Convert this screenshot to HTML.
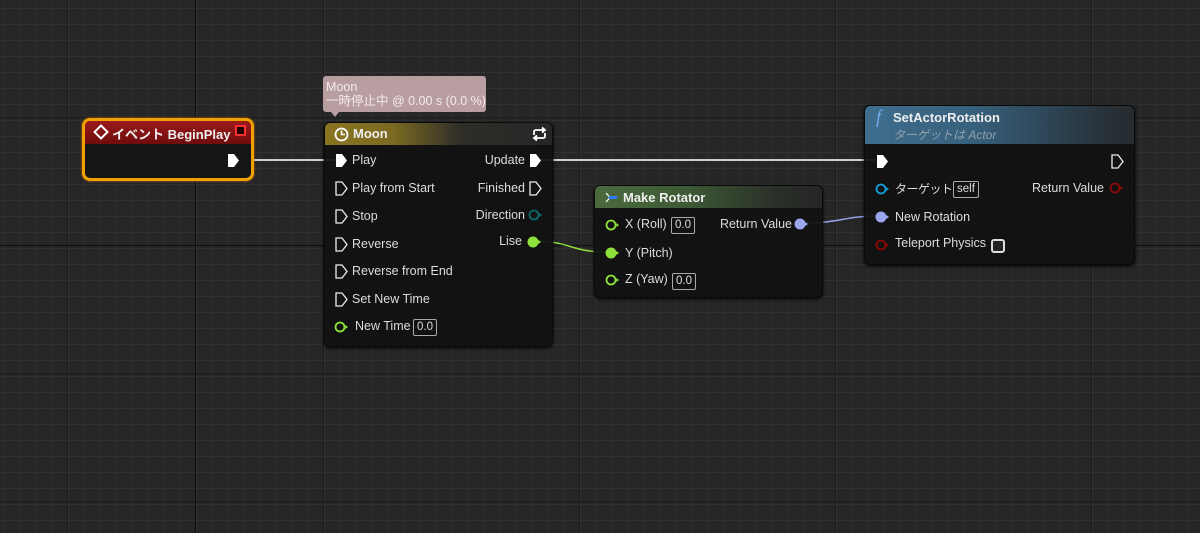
<!DOCTYPE html>
<html><head><meta charset="utf-8"><style>
*{margin:0;padding:0;box-sizing:border-box}
body{width:1200px;height:533px;overflow:hidden;position:relative;background:#262626;font-family:"Liberation Sans","Noto Sans CJK JP",sans-serif;color:#ddd;font-size:12.5px}
.grid{position:absolute;inset:0;background-image:
linear-gradient(90deg,#303030 1px,transparent 1px),linear-gradient(#303030 1px,transparent 1px);
background-size:16px 16px;background-position:4px 8px}
.dk{position:absolute;background:#1c1c1c}
.bk{position:absolute;background:#0e0e0e}
.node{position:absolute;background:rgba(16,17,16,0.93);border-radius:6px;box-shadow:0 1px 3px #000;border:1px solid #0a0a0a}
.hd{position:absolute;left:0;right:0;top:0;border-radius:5px 5px 0 0;font-weight:bold;color:#eee;font-size:12.5px}
.t{position:absolute;white-space:nowrap;color:#dcdcdc}
.p{position:absolute}
.box{position:absolute;border:1px solid #aaa;border-radius:2px;font-size:11.5px;padding:0 3px;height:17px;line-height:15px;color:#ddd}
svg{display:block}
</style></head><body>
<div class="grid"></div>
<div class="dk" style="left:67px;top:0;width:1px;height:533px"></div>
<div class="dk" style="left:323px;top:0;width:1px;height:533px"></div>
<div class="dk" style="left:579px;top:0;width:1px;height:533px"></div>
<div class="dk" style="left:835px;top:0;width:1px;height:533px"></div>
<div class="dk" style="left:1091px;top:0;width:1px;height:533px"></div>
<div class="dk" style="left:0;top:117px;width:1200px;height:1px"></div>
<div class="dk" style="left:0;top:373px;width:1200px;height:1px"></div>
<div class="dk" style="left:0;top:501px;width:1200px;height:1px"></div>
<div class="bk" style="left:195px;top:0;width:1px;height:533px"></div>
<div class="bk" style="left:0;top:245px;width:1200px;height:1px"></div>

<svg style="position:absolute;left:0;top:0" width="1200" height="533">
<path d="M245 160H335" stroke="#cfcfcf" stroke-width="2"/>
<path d="M540 160H875" stroke="#cfcfcf" stroke-width="2"/>
<path d="M535 241C570 241 570 252 607 252" stroke="#8ee03a" stroke-width="1.5" fill="none"/>
<path d="M805 223C840 223 845 216 878 216" stroke="#9ba5f0" stroke-width="1.5" fill="none"/>
</svg>

<!-- BeginPlay -->
<div style="position:absolute;left:82px;top:118px;width:172px;height:63px;border:3px solid #f0a000;border-radius:8px;background:#141514;box-shadow:0 0 2px #c07000">
 <div style="position:absolute;left:0;right:0;top:0;height:23px;background:linear-gradient(#9c1a1a,#6e0c0c);border-radius:5px 5px 0 0"></div>
 <svg class="p" style="left:8px;top:3px" width="16" height="16"><path d="M8 1.5L14.5 8L8 14.5L1.5 8Z" fill="none" stroke="#fff" stroke-width="2"/></svg>
 <div class="t" style="left:27px;top:3px;font-weight:bold;color:#eee;font-size:13px">イベント BeginPlay</div>
 <div class="p" style="left:150px;top:4px;width:11px;height:11px;border:2px solid #ff3030;background:#200"></div>
 <svg class="p" style="left:142px;top:32px" width="13" height="15"><path d="M1 1H7L12 7.5L7 14H1Z" fill="#fff"/></svg>
</div>

<!-- tooltip -->
<div style="position:absolute;left:323px;top:76px;width:163px;height:36px;background:#b89ea0;border-radius:3px;color:#f4eaea;font-size:12.5px;line-height:14px;padding:4px 0 0 3px">Moon<br>一時停止中 @ 0.00 s (0.0 %)</div>
<div style="position:absolute;left:331px;top:112px;width:0;height:0;border-left:4px solid transparent;border-right:4px solid transparent;border-top:5px solid #b89ea0"></div>

<!-- Moon -->
<div class="node" style="left:324px;top:122px;width:229px;height:225px">
 <div class="hd" style="height:22px;background:linear-gradient(90deg,#8a7420 0%,#7b6a22 30%,#2e2d28 60%,#262626 100%)"></div>
 <svg class="p" style="left:9px;top:4px" width="15" height="15"><circle cx="7.5" cy="7.5" r="6" fill="none" stroke="#fff" stroke-width="1.8"/><path d="M7.5 3.5V7.5H11" fill="none" stroke="#fff" stroke-width="1.6"/></svg>
 <div class="t" style="left:28px;top:3px;font-weight:bold;color:#eee;font-size:13px">Moon</div>
 <svg class="p" style="left:206px;top:3px" width="17" height="16"><path d="M3 9V6Q3 4 5 4H13M11 1.5L14 4L11 6.5M14 7V10Q14 12 12 12H4M6 9.5L3 12L6 14.5" fill="none" stroke="#fff" stroke-width="1.8"/></svg>
 <svg class="p" style="left:10px;top:30px" width="13" height="15"><path d="M1 1H7L12 7.5L7 14H1Z" fill="#fff"/></svg>
 <div class="t" style="left:27px;top:30px">Play</div>
 <div class="t" style="right:27px;top:30px">Update</div>
 <svg class="p" style="left:204px;top:30px" width="13" height="15"><path d="M1 1H7L12 7.5L7 14H1Z" fill="#fff"/></svg>
 <svg class="p" style="left:10px;top:58px" width="13" height="15"><path d="M1 1H7L12 7.5L7 14H1Z" fill="none" stroke="#eee" stroke-width="1.3"/></svg>
 <div class="t" style="left:27px;top:58px">Play from Start</div>
 <div class="t" style="right:27px;top:58px">Finished</div>
 <svg class="p" style="left:204px;top:58px" width="13" height="15"><path d="M1 1H7L12 7.5L7 14H1Z" fill="none" stroke="#eee" stroke-width="1.3"/></svg>
 <svg class="p" style="left:10px;top:86px" width="13" height="15"><path d="M1 1H7L12 7.5L7 14H1Z" fill="none" stroke="#eee" stroke-width="1.3"/></svg>
 <div class="t" style="left:27px;top:86px">Stop</div>
 <div class="t" style="right:27px;top:85px">Direction</div>
 <svg class="p" style="left:203px;top:86px" width="16" height="12"><circle cx="6" cy="6" r="4.5" fill="none" stroke="#0d6b68" stroke-width="1.8"/><path d="M11.5 4L14 6L11.5 8Z" fill="#0d6b68"/></svg>
 <svg class="p" style="left:10px;top:114px" width="13" height="15"><path d="M1 1H7L12 7.5L7 14H1Z" fill="none" stroke="#eee" stroke-width="1.3"/></svg>
 <div class="t" style="left:27px;top:114px">Reverse</div>
 <div class="t" style="right:30px;top:111px">Lise</div>
 <svg class="p" style="left:202px;top:113px" width="16" height="12"><circle cx="6" cy="6" r="5.5" fill="#8ee03a"/><path d="M11.5 4L14 6L11.5 8Z" fill="#8ee03a"/></svg>
 <svg class="p" style="left:10px;top:141px" width="13" height="15"><path d="M1 1H7L12 7.5L7 14H1Z" fill="none" stroke="#eee" stroke-width="1.3"/></svg>
 <div class="t" style="left:27px;top:141px">Reverse from End</div>
 <svg class="p" style="left:10px;top:169px" width="13" height="15"><path d="M1 1H7L12 7.5L7 14H1Z" fill="none" stroke="#eee" stroke-width="1.3"/></svg>
 <div class="t" style="left:27px;top:169px">Set New Time</div>
 <svg class="p" style="left:9px;top:198px" width="16" height="12"><circle cx="6" cy="6" r="4.5" fill="none" stroke="#8ee03a" stroke-width="1.8"/><path d="M11.5 4L14 6L11.5 8Z" fill="#8ee03a"/></svg>
 <div class="t" style="left:30px;top:196px">New Time</div>
 <div class="box" style="left:88px;top:196px">0.0</div>
</div>

<!-- Make Rotator -->
<div class="node" style="left:594px;top:185px;width:229px;height:113px">
 <div class="hd" style="height:22px;background:linear-gradient(90deg,#4a6a3e 0%,#3e5a36 40%,#2a2f28 80%,#262626 100%)"></div>
 <svg class="p" style="left:9px;top:5px" width="14" height="13"><path d="M2 2L6 6.5L2 11" fill="none" stroke="#fff" stroke-width="1.3"/><path d="M5 6.5H13" stroke="#2e7bff" stroke-width="3"/></svg>
 <div class="t" style="left:28px;top:4px;font-weight:bold;color:#eee;font-size:13px">Make Rotator</div>
 <svg class="p" style="left:10px;top:33px" width="16" height="12"><circle cx="6" cy="6" r="4.5" fill="none" stroke="#8ee03a" stroke-width="1.8"/><path d="M11.5 4L14 6L11.5 8Z" fill="#8ee03a"/></svg>
 <div class="t" style="left:30px;top:31px">X (Roll)</div>
 <div class="box" style="left:76px;top:31px">0.0</div>
 <div class="t" style="right:30px;top:31px">Return Value</div>
 <svg class="p" style="left:199px;top:32px" width="16" height="12"><circle cx="6" cy="6" r="5.5" fill="#9ba5f0"/><path d="M11.5 4L14 6L11.5 8Z" fill="#9ba5f0"/></svg>
 <svg class="p" style="left:10px;top:61px" width="16" height="12"><circle cx="6" cy="6" r="5.5" fill="#8ee03a"/><path d="M11.5 4L14 6L11.5 8Z" fill="#8ee03a"/></svg>
 <div class="t" style="left:30px;top:60px">Y (Pitch)</div>
 <svg class="p" style="left:10px;top:88px" width="16" height="12"><circle cx="6" cy="6" r="4.5" fill="none" stroke="#8ee03a" stroke-width="1.8"/><path d="M11.5 4L14 6L11.5 8Z" fill="#8ee03a"/></svg>
 <div class="t" style="left:30px;top:86px">Z (Yaw)</div>
 <div class="box" style="left:77px;top:87px">0.0</div>
</div>

<!-- SetActorRotation -->
<div class="node" style="left:864px;top:105px;width:271px;height:160px">
 <div class="hd" style="height:38px;background:linear-gradient(90deg,#3f6e8e 0%,#37607c 40%,#2a3a46 80%,#262a2d 100%)"></div>
 <div class="t" style="left:11px;top:1px;font-family:'Liberation Serif',serif;font-style:italic;font-size:19px;color:#6fa8e8">f</div>
 <div class="t" style="left:28px;top:4px;font-weight:bold;color:#eee;font-size:13px">SetActorRotation</div>
 <div class="t" style="left:28px;top:20px;color:#8fa3ad;font-style:italic;font-size:12px">ターゲットは Actor</div>
 <svg class="p" style="left:11px;top:48px" width="13" height="15"><path d="M1 1H7L12 7.5L7 14H1Z" fill="#fff"/></svg>
 <svg class="p" style="left:246px;top:48px" width="13" height="15"><path d="M1 1H7L12 7.5L7 14H1Z" fill="none" stroke="#eee" stroke-width="1.3"/></svg>
 <svg class="p" style="left:10px;top:77px" width="16" height="12"><circle cx="6" cy="6" r="4.5" fill="none" stroke="#14a0e0" stroke-width="1.8"/><path d="M11.5 4L14 6L11.5 8Z" fill="#14a0e0"/></svg>
 <div class="t" style="left:30px;top:74px;font-size:12px;letter-spacing:-0.5px">ターゲット</div>
 <div class="box" style="left:88px;top:75px">self</div>
 <div class="t" style="right:30px;top:75px">Return Value</div>
 <svg class="p" style="left:244px;top:76px" width="16" height="12"><circle cx="6" cy="6" r="4.5" fill="none" stroke="#8a0a0a" stroke-width="1.8"/><path d="M11.5 4L14 6L11.5 8Z" fill="#8a0a0a"/></svg>
 <svg class="p" style="left:10px;top:105px" width="16" height="12"><circle cx="6" cy="6" r="5.5" fill="#9ba5f0"/><path d="M11.5 4L14 6L11.5 8Z" fill="#9ba5f0"/></svg>
 <div class="t" style="left:30px;top:104px">New Rotation</div>
 <svg class="p" style="left:10px;top:133px" width="16" height="12"><circle cx="6" cy="6" r="4.5" fill="none" stroke="#8a0a0a" stroke-width="1.8"/><path d="M11.5 4L14 6L11.5 8Z" fill="#8a0a0a"/></svg>
 <div class="t" style="left:30px;top:130px">Teleport Physics</div>
 <div class="p" style="left:126px;top:133px;width:14px;height:14px;border:2px solid #ddd;border-radius:3px;background:#222"></div>
</div>
</body></html>
